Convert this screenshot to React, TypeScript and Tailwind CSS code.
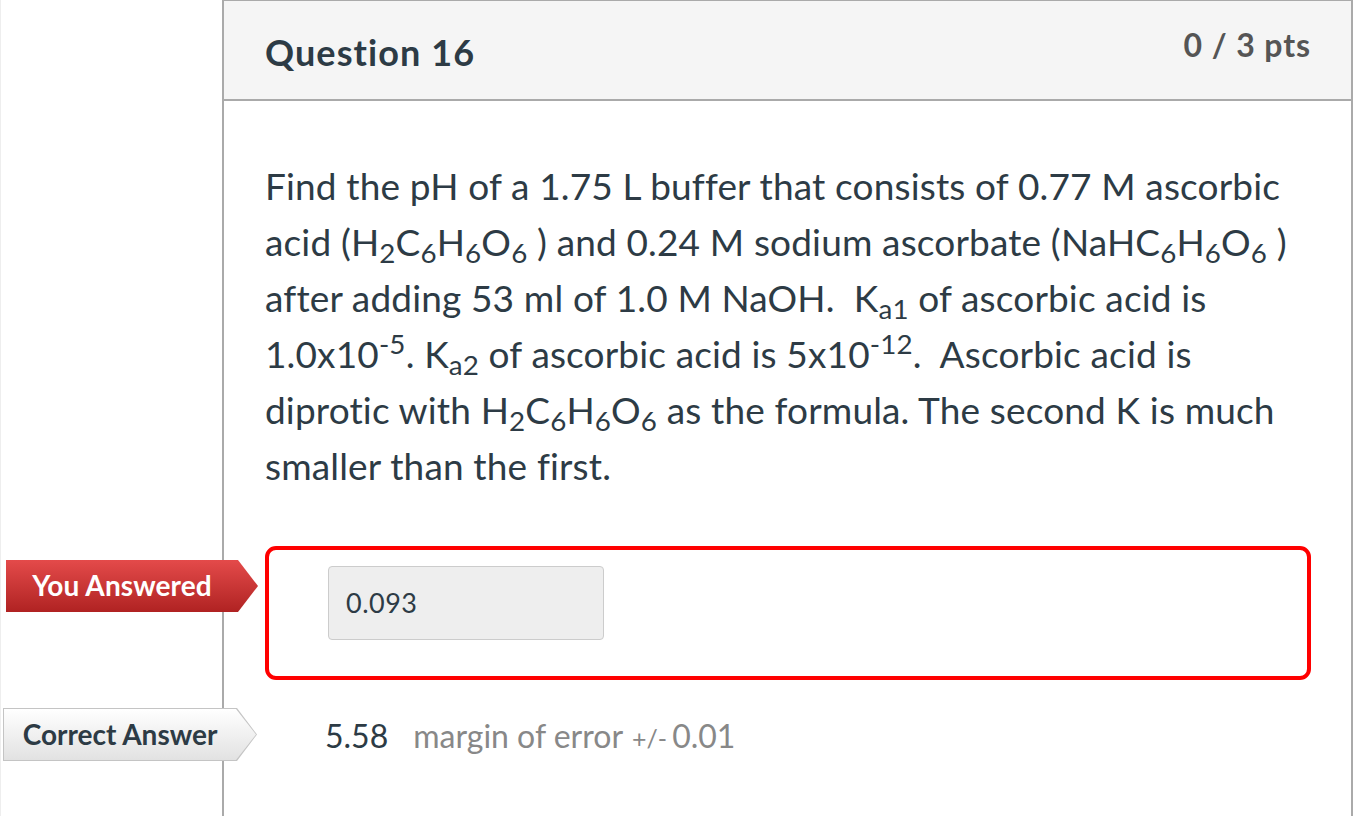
import React from 'react';

const font = { fontFamily: 'Lato, "Open Sans", sans-serif' };

function Tag({ kind, label }: { kind: 'wrong' | 'correct'; label: string }) {
  const shape = 'polygon(0 0, calc(100% - 20px) 0, 100% 50%, calc(100% - 20px) 100%, 0 100%)';
  if (kind === 'wrong') {
    return (
      <div
        className="flex h-[52px] w-[252px] items-center justify-center pr-[20px] bg-gradient-to-b from-[#e44a4a] to-[#b02222] text-[28px] font-bold text-white"
        style={{ clipPath: shape }}
      >
        <span className="-mt-[2px] tracking-[0.1px]">{label}</span>
      </div>
    );
  }
  return (
    <div className="h-[53px] w-[254px] bg-[#c4c4c4] p-px" style={{ clipPath: shape }}>
      <div
        className="flex h-full w-full items-center justify-center pr-[20px] bg-gradient-to-b from-[#ffffff] to-[#e2e2e2] text-[28px] font-bold text-[#2d3b45]"
        style={{ clipPath: shape }}
      >
        <span className="-mt-[2px] tracking-[0px]">{label}</span>
      </div>
    </div>
  );
}

export default function App() {
  return (
    <div className="flex h-[816px] w-full overflow-hidden border-l border-[#eeeeee] bg-white text-[#2d3b45]" style={font}>
      <div className="w-[221px] shrink-0" />
      <div className="flex min-w-0 flex-1 flex-col border-l-2 border-r-2 border-t border-[#aaaaaa]">
        {/* header */}
        <div className="flex h-[100px] shrink-0 items-start justify-between border-b-2 border-[#aaaaaa] bg-[#f5f5f5] pl-[41px] pr-[40px]">
          <h2 className="mt-[30px] text-[36px] font-bold leading-[1.2] tracking-[1.1px]">Question 16</h2>
          <div className="mt-[25px] text-[32px] font-bold leading-[1.2] tracking-[0.9px] text-[#555555]">0 / 3 pts</div>
        </div>

        {/* body */}
        <div className="pl-[41px] pr-[40px] pt-[57px]">
          <p className="text-[37px] leading-[56px] tracking-[0.15px]">
            <span className="block whitespace-nowrap">Find the pH of a 1.75 L buffer that consists of 0.77 M ascorbic</span>
            <span className="block whitespace-nowrap">
              acid (H<sub>2</sub>C<sub>6</sub>H<sub>6</sub>O<sub>6</sub> ) and 0.24 M sodium ascorbate (NaHC<sub>6</sub>H<sub>6</sub>O<sub>6</sub> )
            </span>
            <span className="block whitespace-nowrap">
              after adding 53 ml of 1.0 M NaOH.&nbsp; K<sub>a1</sub> of ascorbic acid is
            </span>
            <span className="block whitespace-nowrap">
              1.0x10<sup>-5</sup>. K<sub>a2</sub> of ascorbic acid is 5x10<sup>-12</sup>.&nbsp; Ascorbic acid is
            </span>
            <span className="block whitespace-nowrap">
              diprotic with H<sub>2</sub>C<sub>6</sub>H<sub>6</sub>O<sub>6</sub> as the formula. The second K is much
            </span>
            <span className="block whitespace-nowrap">smaller than the first.</span>
          </p>

          {/* you answered */}
          <div className="relative mt-[52px]">
            <div className="absolute left-[-259px] top-[14px]">
              <Tag kind="wrong" label="You Answered" />
            </div>
            <div className="h-[134px] rounded-[11px] border-4 border-[#ff0000] pl-[59px] pt-[16px]">
              <div className="flex h-[74px] w-[276px] items-center rounded-[4px] border border-[#cccccc] bg-[#eeeeee] pl-[17px] text-[27px] tracking-[0.5px]">
                0.093
              </div>
            </div>
          </div>

          {/* correct answer */}
          <div className="relative mt-[38px]">
            <div className="absolute left-[-262px] top-[-10px]">
              <Tag kind="correct" label="Correct Answer" />
            </div>
            <div className="flex items-baseline pl-[60px] text-[32px] leading-[36px]">
              <span>5.58</span>
              <span className="ml-[25px] text-[#888888]">margin of error</span>
              <span className="ml-[9px] text-[25px] text-[#888888]">+/-</span>
              <span className="ml-[5px] text-[#888888]">0.01</span>
            </div>
          </div>
        </div>
      </div>
    </div>
  );
}
